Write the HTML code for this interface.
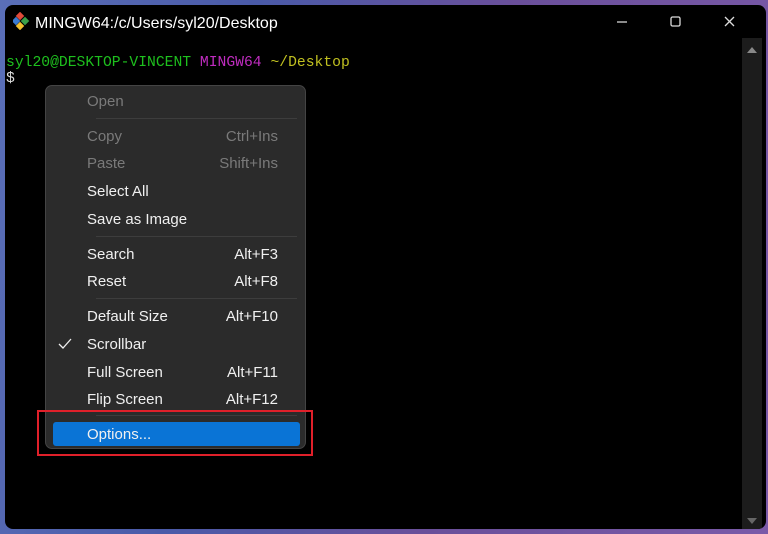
<!DOCTYPE html>
<html><head><style>
body{margin:0;width:768px;height:534px;overflow:hidden;background:linear-gradient(100deg,#5a6fb8 0%,#4a5aa8 30%,#6a4f9a 60%,#7a5aa8 100%);position:relative;font-family:"Liberation Sans",sans-serif}
.win{position:absolute;left:5px;top:5px;width:761px;height:524px;background:#000;border-radius:8px;overflow:hidden}
.title{position:absolute;left:30px;top:10px;color:#fff;font-size:16px}
.term{position:absolute;left:1px;top:50px;font-family:"Liberation Mono",monospace;font-size:14.7px;line-height:16px;white-space:pre}
.sb{position:absolute;left:737px;top:33px;width:20px;height:491px;background:#1c1c1c}
.menu{position:absolute;left:45px;top:85px;width:261px;height:364px;background:#2b2b2b;border:1px solid #444;border-radius:7px;box-sizing:border-box}
.it{position:absolute;left:41px;right:27px;font-size:15px;color:#f0f0f0;height:20px;line-height:20px}
.it span{position:absolute;right:0}
.dis{color:#7a7a7a}
.sep{position:absolute;left:50px;right:8px;height:1px;background:#3d3d3d}
.hl{position:absolute;left:7px;top:336px;width:247px;height:24px;background:#0a74d6;border-radius:3px}
.red{position:absolute;left:37px;top:410px;width:276px;height:46px;border:2px solid #e0202a;box-sizing:border-box}
</style></head><body>
<div class="win">
<svg style="position:absolute;left:8px;top:7px" width="18" height="18" viewBox="0 0 18 18"><rect x="4" y="1" width="6" height="6" transform="rotate(45 7 4)" fill="#e04a3a"/><rect x="9" y="6" width="6" height="6" transform="rotate(45 12 9)" fill="#3aa04a"/><rect x="4" y="11" width="6" height="6" transform="rotate(45 7 14)" fill="#f0c030"/><rect x="0" y="6" width="6" height="6" transform="rotate(45 3 9)" fill="#3a7ad0"/></svg>
<div class="title">MINGW64:/c/Users/syl20/Desktop</div>
<svg style="position:absolute;left:610px;top:10px" width="140" height="14"><line x1="2" y1="7" x2="12" y2="7" stroke="#ddd" stroke-width="1.3"/><rect x="56" y="2" width="9" height="9" rx="1.5" fill="none" stroke="#ddd" stroke-width="1.3"/><path d="M110 2l9 9M119 2l-9 9" stroke="#ddd" stroke-width="1.3"/></svg>
<div class="term"><span style="color:#1ec01e">syl20@DESKTOP-VINCENT</span> <span style="color:#c02cc0">MINGW64</span> <span style="color:#c0c020">~/Desktop</span>
<span style="color:#ddd">$</span></div>
<div class="sb"><svg style="position:absolute;left:5px;top:8px" width="10" height="8"><path d="M0 7L5 1L10 7Z" fill="#888"/></svg><svg style="position:absolute;left:5px;top:479px" width="10" height="8"><path d="M0 1L5 7L10 1Z" fill="#666"/></svg></div>
</div>
<div class="menu">
<div class="it dis" style="top:6px">Open</div>
<div class="sep" style="top:32px"></div>
<div class="it dis" style="top:41px">Copy<span>Ctrl+Ins</span></div>
<div class="it dis" style="top:68px">Paste<span>Shift+Ins</span></div>
<div class="it" style="top:96px">Select All</div>
<div class="it" style="top:124px">Save as Image</div>
<div class="sep" style="top:150px"></div>
<div class="it" style="top:159px">Search<span>Alt+F3</span></div>
<div class="it" style="top:186px">Reset<span>Alt+F8</span></div>
<div class="sep" style="top:212px"></div>
<div class="it" style="top:221px">Default Size<span>Alt+F10</span></div>
<div class="it" style="top:249px">Scrollbar<span></span></div>
<svg style="position:absolute;left:12px;top:252px" width="14" height="12"><path d="M1 6l4 4 8-9" fill="none" stroke="#eee" stroke-width="1.3"/></svg>
<div class="it" style="top:277px">Full Screen<span>Alt+F11</span></div>
<div class="it" style="top:304px">Flip Screen<span>Alt+F12</span></div>
<div class="sep" style="top:329px"></div>
<div class="hl"></div>
<div class="it" style="top:339px">Options...</div>
</div>
<div class="red"></div>
</body></html>
